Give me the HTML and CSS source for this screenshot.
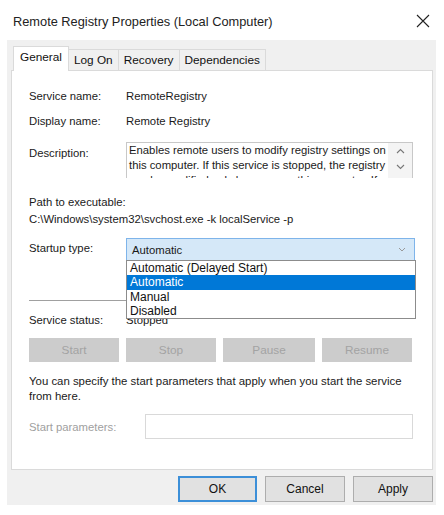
FILE: index.html
```html
<!DOCTYPE html>
<html>
<head>
<meta charset="utf-8">
<link rel="stylesheet" href="styles.css">
</head>
<body>
<div class="titlebar">
  <span class="title">Remote Registry Properties (Local Computer)</span>
  <svg class="close" width="14" height="14" viewBox="0 0 14 14"><path d="M1 1 L13 13 M13 1 L1 13" stroke="#222" stroke-width="1.1" fill="none"/></svg>
</div>
<div class="dialog">
  <div class="tabs">
    <div class="tab active">General</div>
    <div class="tab">Log On</div>
    <div class="tab">Recovery</div>
    <div class="tab">Dependencies</div>
  </div>
  <div class="panel">
    <div class="row r-service"><span class="label">Service name:</span><span>RemoteRegistry</span></div>
    <div class="row r-display"><span class="label">Display name:</span><span>Remote Registry</span></div>
    <div class="row r-desc">
      <span class="label desc-label">Description:</span>
      <div class="descbox">
        <div class="desctext">Enables remote users to modify registry settings on this computer. If this service is stopped, the registry can be modified only by users on this computer. If</div>
        <div class="scroll">
          <svg width="9" height="6" viewBox="0 0 9 6"><path d="M1 5 L4.5 1.5 L8 5" stroke="#777" stroke-width="1.1" fill="none"/></svg>
          <svg width="9" height="6" viewBox="0 0 9 6"><path d="M1 1 L4.5 4.5 L8 1" stroke="#777" stroke-width="1.1" fill="none"/></svg>
        </div>
      </div>
    </div>
    <div class="path-label">Path to executable:</div>
    <div class="path">C:\Windows\system32\svchost.exe -k localService -p</div>
    <div class="row r-startup">
      <span class="label">Startup type:</span>
      <div class="selectwrap">
        <div class="select"><span>Automatic</span>
          <svg width="8" height="5" viewBox="0 0 8 5"><path d="M1 1 L4 4 L7 1" stroke="#999" stroke-width="1" fill="none"/></svg>
        </div>
        <ul class="options">
          <li>Automatic (Delayed Start)</li>
          <li class="sel">Automatic</li>
          <li>Manual</li>
          <li>Disabled</li>
        </ul>
      </div>
    </div>
    <div class="sep"></div>
    <div class="row r-status"><span class="label">Service status:</span><span>Stopped</span></div>
    <div class="svcbtns">
      <div class="btn dis">Start</div>
      <div class="btn dis">Stop</div>
      <div class="btn dis">Pause</div>
      <div class="btn dis">Resume</div>
    </div>
    <p class="info">You can specify the start parameters that apply when you start the service from here.</p>
    <div class="row r-params"><span class="label params-label">Start parameters:</span><div class="input"></div></div>
  </div>
  <div class="footer">
    <div class="fbtn ok">OK</div>
    <div class="fbtn">Cancel</div>
    <div class="fbtn">Apply</div>
  </div>
</div>
</body>
</html>
```
FILE: styles.css
```css
body {
  margin: 0;
  background: #ffffff;
  font-family: "Liberation Sans", Arial, sans-serif;
  font-size: 11.3px;
  color: #1a1a1a;
}
.titlebar {
  height: 40px;
  display: flex;
  align-items: center;
  justify-content: space-between;
  padding: 0 14px 0 13px;
  box-sizing: border-box;
}
.title {
  font-family: "Liberation Sans", Arial, sans-serif;
  font-size: 12.8px;
  color: #222;
  margin-top: 2px;
}
.close { margin-top: 2px; }
.dialog {
  margin: 0 8px 0 7px;
  background: #f0f0f0;
  height: 465px;
  padding: 6px 3px 0 4px;
  box-sizing: border-box;
}
.tabs {
  display: flex;
  padding-left: 2px;
  height: 24px;
  align-items: flex-end;
  position: relative;
  z-index: 1;
  font-size: 11.8px;
}
.tab {
  height: 21px;
  line-height: 21px;
  padding: 0 5px;
  border: 1px solid #dadada;
  border-bottom: none;
  border-left: none;
  background: #f0f0f0;
  box-sizing: border-box;
  color: #111;
}
.tab.active {
  height: 25px;
  line-height: 21px;
  background: #fff;
  border-left: 1px solid #dadada;
  padding: 0 6px;
  margin-bottom: -1px;
}
.panel {
  background: #fff;
  border: 1px solid #dadada;
  height: 400px;
  box-sizing: border-box;
  padding: 0 19px 0 17px;
  position: relative;
}
.row {
  display: flex;
  align-items: center;
}
.label {
  width: 97px;
  flex: none;
}
.r-service { margin-top: 17px; height: 16px; }
.r-display { margin-top: 9px; height: 16px; }
.r-desc { margin-top: 13px; align-items: flex-start; }
.desc-label { margin-top: 5px; }
.descbox {
  width: 289px;
  height: 36px;
  border: 1px solid #c8c8c8;
  border-bottom: none;
  box-sizing: border-box;
  display: flex;
  overflow: hidden;
}
.desctext {
  flex: 1;
  padding: 0 0 0 2px;
  line-height: 15px;
}
.scroll {
  width: 24px;
  flex: none;
  background: #f4f4f4;
  display: flex;
  flex-direction: column;
  align-items: center;
  gap: 10px;
  padding-top: 5px;
}
.path-label { margin-top: 16px; line-height: 16px; }
.path { margin-top: 1px; line-height: 16px; }
.r-startup { margin-top: 11px; align-items: flex-start; }
.r-startup .label { margin-top: 4px; }
.selectwrap { position: relative; }
.select {
  width: 289px;
  height: 23px;
  box-sizing: border-box;
  background: #d5e8f8;
  border: 1px solid #7eb4ea;
  display: flex;
  align-items: center;
  justify-content: space-between;
  padding: 0 8px 0 5px;
}
.options {
  position: absolute;
  left: 0;
  top: 22px;
  width: 290px;
  margin: 0;
  padding: 0;
  list-style: none;
  background: #fff;
  border: 1px solid #8c8c8c;
  box-sizing: border-box;
  font-size: 12px;
  z-index: 2;
}
.options li {
  height: 14.3px;
  line-height: 14.3px;
  padding-left: 3px;
  color: #111;
}
.options li.sel {
  background: #0078d7;
  color: #fff;
}
.sep {
  margin-top: 39px;
  height: 1px;
  background: #a0a0a0;
  width: 385px;
}
.r-status { margin-top: 11px; height: 16px; }
.svcbtns {
  display: flex;
  gap: 7px;
  margin-top: 10px;
}
.btn {
  height: 24px;
  line-height: 24px;
  text-align: center;
  background: #cccccc;
  color: #a3a3a3;
  font-size: 11.8px;
}
.btn:nth-child(1) { width: 90px; }
.btn:nth-child(2) { width: 90px; }
.btn:nth-child(3) { width: 92px; }
.btn:nth-child(4) { width: 90px; }
.info {
  margin: 12px 0 0;
  line-height: 15px;
  font-size: 11.4px;
}
.r-params { margin-top: 10px; }
.params-label { width: 116px; color: #a0a0a0; }
.input {
  width: 270px;
  height: 25px;
  border: 1px solid #d9d9d9;
  box-sizing: border-box;
}
.footer {
  display: flex;
  justify-content: flex-end;
  gap: 8px;
  padding-top: 6px;
}
.fbtn {
  width: 80px;
  height: 26px;
  box-sizing: border-box;
  border: 1px solid #adadad;
  background: #e1e1e1;
  display: flex;
  align-items: center;
  justify-content: center;
  font-size: 12px;
  color: #111;
}
.fbtn.ok {
  border: 2px solid #3c8fd8;
  width: 79px;
}
```
